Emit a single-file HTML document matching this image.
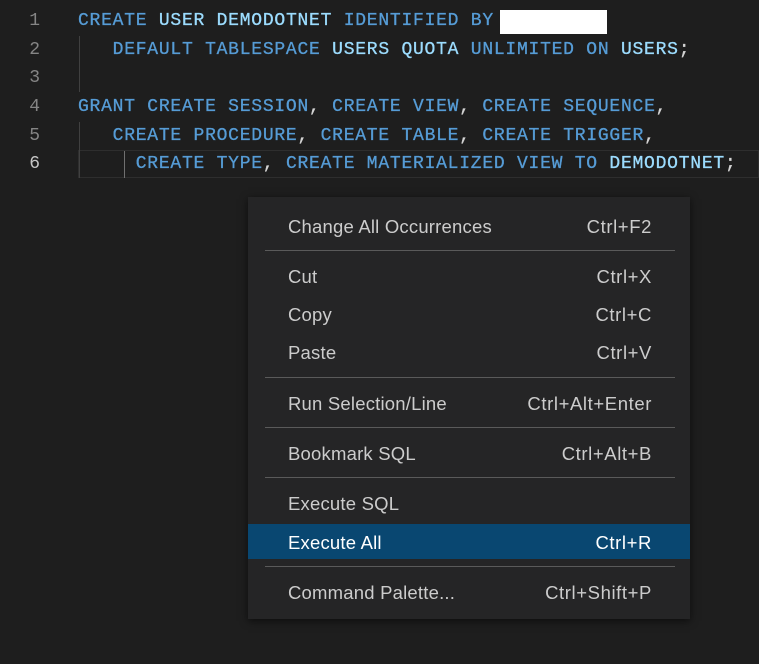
<!DOCTYPE html>
<html><head><style>
body{margin:0;width:759px;height:664px;background:#1e1e1e;overflow:hidden;position:relative;font-family:"Liberation Sans",sans-serif}
.ln{position:absolute;left:0;width:40px;text-align:right;font:18px "Liberation Mono",monospace;color:#858585}
.code{position:absolute;left:78px;font:18px "Liberation Mono",monospace;letter-spacing:0.75px;color:#569cd6;white-space:pre;-webkit-text-stroke:0.3px currentColor}
.id{color:#9cdcfe}
.p{color:#d4d4d4}
.menu{position:absolute;left:248px;top:197px;width:442px;height:422px;background:#252526;box-shadow:0 2px 8px rgba(0,0,0,.6)}
.it{position:absolute;left:0;width:442px;height:35px;line-height:37px;color:#cccccc;font-size:18.5px}
.it span{position:absolute;left:40px;letter-spacing:0.2px}
.it b{position:absolute;right:38px;font-weight:normal;letter-spacing:0.6px}
.sep{position:absolute;left:17px;width:410px;height:1px;background:#5a5a5a}
.g{position:absolute;width:1px;background:#404040}
</style></head><body>
<div style="position:absolute;left:78px;top:150px;width:681px;height:28px;border:1px solid #2e2e2e;box-sizing:border-box"></div>
<div class="g" style="left:79px;top:36px;height:56px"></div>
<div class="g" style="left:79px;top:122px;height:56px"></div>
<div class="g" style="left:124px;top:151px;height:27px;background:#707070"></div>
<div class="ln" style="top:11px">1</div>
<div class="ln" style="top:40px">2</div>
<div class="ln" style="top:68px">3</div>
<div class="ln" style="top:97px">4</div>
<div class="ln" style="top:126px">5</div>
<div class="ln" style="top:154px;color:#c6c6c6">6</div>
<div class="code" style="top:11px">CREATE <span class="id">USER DEMODOTNET</span> IDENTIFIED BY</div>
<div style="position:absolute;left:500px;top:10px;width:107px;height:24px;background:#fff"></div>
<div class="code" style="top:40px">   DEFAULT TABLESPACE <span class="id">USERS QUOTA</span> UNLIMITED ON <span class="id">USERS</span><span class="p">;</span></div>
<div class="code" style="top:97px">GRANT CREATE SESSION<span class="p">,</span> CREATE VIEW<span class="p">,</span> CREATE SEQUENCE<span class="p">,</span></div>
<div class="code" style="top:126px">   CREATE PROCEDURE<span class="p">,</span> CREATE TABLE<span class="p">,</span> CREATE TRIGGER<span class="p">,</span></div>
<div class="code" style="top:154px">     CREATE TYPE<span class="p">,</span> CREATE MATERIALIZED VIEW TO <span class="id">DEMODOTNET</span><span class="p">;</span></div>
<div class="menu">
<div class="it" style="top:11px"><span>Change All Occurrences</span><b>Ctrl+F2</b></div>
<div class="sep" style="top:53px"></div>
<div class="it" style="top:61px"><span>Cut</span><b>Ctrl+X</b></div>
<div class="it" style="top:99px"><span>Copy</span><b>Ctrl+C</b></div>
<div class="it" style="top:137px"><span>Paste</span><b>Ctrl+V</b></div>
<div class="sep" style="top:180px"></div>
<div class="it" style="top:188px"><span>Run Selection/Line</span><b>Ctrl+Alt+Enter</b></div>
<div class="sep" style="top:230px"></div>
<div class="it" style="top:238px"><span>Bookmark SQL</span><b>Ctrl+Alt+B</b></div>
<div class="sep" style="top:280px"></div>
<div class="it" style="top:288px"><span>Execute SQL</span><b></b></div>
<div class="it" style="top:327px;background:#094771;color:#fff"><span>Execute All</span><b>Ctrl+R</b></div>
<div class="sep" style="top:369px"></div>
<div class="it" style="top:377px"><span>Command Palette...</span><b>Ctrl+Shift+P</b></div>
</div>
</body></html>
